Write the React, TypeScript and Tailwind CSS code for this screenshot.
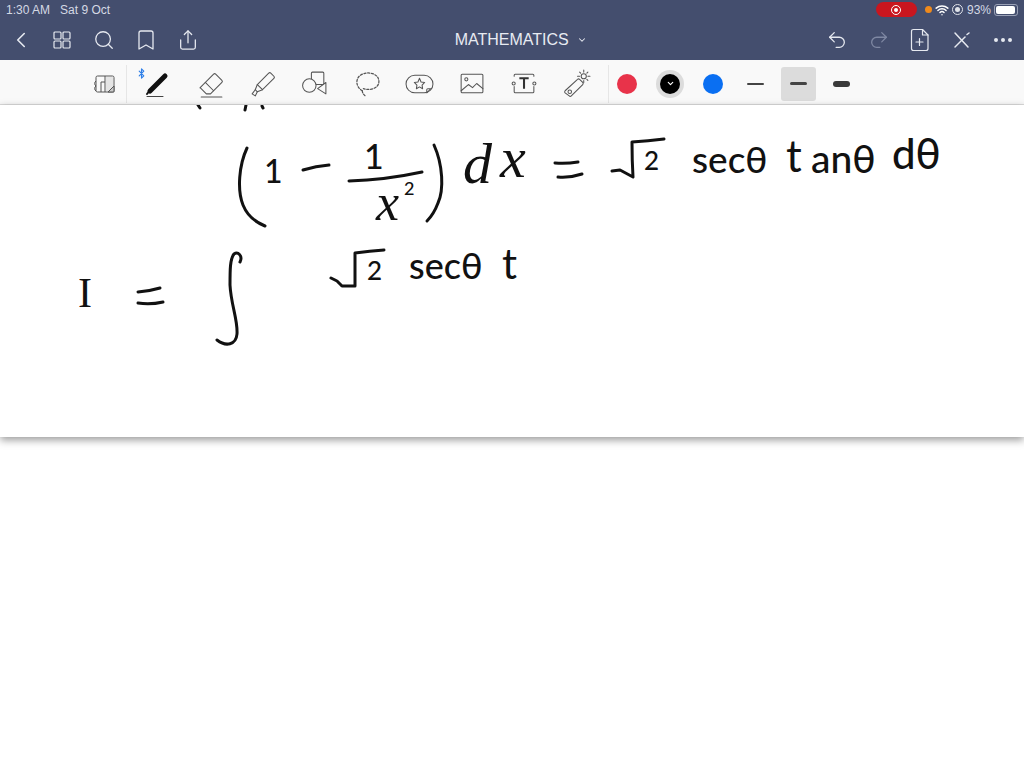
import React from "react";
import { ChevronLeft, ChevronDown, Search, Bookmark, Share, Undo2, Redo2, MoreHorizontal, Wifi, Bluetooth } from "lucide-react";

// each toolbar tool is a small line drawing, 28x28
function Tool({ children }: { children: React.ReactNode }) {
  return (
    <div className="flex w-[52.25px] items-center justify-center">
      <svg width="29" height="29" viewBox="0 0 28 28" fill="none" stroke="#555" strokeWidth="1" strokeLinecap="round" strokeLinejoin="round">
        {children}
      </svg>
    </div>
  );
}

function ColorDot({ className, children }: { className: string; children?: React.ReactNode }) {
  return <div className={`flex h-5 w-5 items-center justify-center rounded-full ${className}`}>{children}</div>;
}

function StatusBar() {
  return (
    <div className="flex h-[19px] items-center justify-between pl-[6px] pr-[6px] text-[12px] text-[#d5d9e4]">
      <div className="flex gap-[10px]">
        <span>1:30 AM</span>
        <span>Sat 9 Oct</span>
      </div>
      <div className="flex items-center">
        <div className="flex h-[15px] w-[41px] items-center justify-center rounded-full bg-[#c9161f]">
          <div className="flex h-[10px] w-[10px] items-center justify-center rounded-full border border-white">
            <div className="h-1 w-1 rounded-full bg-white" />
          </div>
        </div>
        <div className="ml-[8px] h-[7px] w-[7px] rounded-full bg-[#f08a1c]" />
        <Wifi className="ml-[3px] h-[14px] w-[14px] text-white" strokeWidth={2.5} />
        <div className="ml-[3px] flex h-[11px] w-[11px] items-center justify-center rounded-full border border-[#e0e3ea]">
          <div className="h-[5px] w-[5px] rounded-full bg-[#e0e3ea]" />
        </div>
        <span className="ml-[4px]">93%</span>
        <div className="ml-[3px] flex h-[12px] w-[24px] items-center rounded-[3px] border border-[#9aa1b6] p-px">
          <div className="h-full w-[19px] rounded-[2px] bg-white" />
        </div>
      </div>
    </div>
  );
}

function NavBar() {
  return (
    <div className="flex h-[41px] items-center justify-between pt-[1px] text-[#e6e9f0]">
      <div className="flex items-center">
        <div className="flex w-[41px] justify-center"><ChevronLeft className="h-[26px] w-[26px]" strokeWidth={1.5} /></div>
        <div className="flex w-[42px] justify-center">
          <svg width="20" height="20" viewBox="0 0 20 20" fill="none" stroke="currentColor" strokeWidth="1.2">
            <rect x="2" y="2" width="7" height="7" rx="1" />
            <rect x="11" y="2" width="7" height="7" rx="1" />
            <rect x="2" y="11" width="7" height="7" rx="1" />
            <rect x="11" y="11" width="7" height="7" rx="1" />
          </svg>
        </div>
        <div className="flex w-[42px] justify-center"><Search className="h-[22px] w-[22px]" strokeWidth={1.4} /></div>
        <div className="flex w-[42px] justify-center"><Bookmark className="h-[24px] w-[24px]" strokeWidth={1.3} /></div>
        <div className="flex w-[42px] justify-center"><Share className="h-[22px] w-[22px]" strokeWidth={1.4} /></div>
      </div>
      <div className="flex items-center pl-[16px] text-[16px] text-[#e8ebf2]">
        <span>MATHEMATICS</span>
        <ChevronDown className="ml-2 h-[10px] w-[10px]" strokeWidth={2.5} />
      </div>
      <div className="flex items-center">
        <div className="flex w-[41.5px] justify-center"><Undo2 className="h-[22px] w-[22px]" strokeWidth={1.4} /></div>
        <div className="flex w-[41.5px] justify-center"><Redo2 className="h-[22px] w-[22px] text-[#7f88a3]" strokeWidth={1.4} /></div>
        <div className="flex w-[41.5px] justify-center">
          <svg width="20" height="24" viewBox="0 0 20 24" fill="none" stroke="currentColor" strokeWidth="1.2" strokeLinejoin="round" strokeLinecap="round">
            <path d="M3.5 1.5 H12.5 L18 7 V20.5 Q18 22.5 16 22.5 H3.5 Q1.5 22.5 1.5 20.5 V3.5 Q1.5 1.5 3.5 1.5 Z" />
            <path d="M12.5 1.5 V7 H18" />
            <path d="M6 14 H13 M9.5 10.5 V17.5" />
          </svg>
        </div>
        <div className="flex w-[41.5px] justify-center">
          <svg width="20" height="20" viewBox="0 0 20 20" fill="none" stroke="currentColor" strokeWidth="1.5" strokeLinecap="round">
            <path d="M3 3 L16 17" />
            <path d="M3 17 L13 7" />
            <path d="M15 4.5 L17 3" />
          </svg>
        </div>
        <div className="flex w-[41.5px] justify-center"><MoreHorizontal className="h-6 w-6" strokeWidth={2} /></div>
      </div>
    </div>
  );
}

function ToolBar() {
  return (
    <div className="flex h-[45px] items-center border-b border-[#dcdcdc] bg-[#f9f9f9] pl-[93px] pt-[3px]">
      <svg width="22" height="20" viewBox="0 0 22 20" fill="none" stroke="#555" strokeWidth="1">
        <rect x="3" y="2" width="18" height="16" rx="1.5" />
        <rect x="13" y="3" width="7" height="14" fill="#e5e5e5" stroke="none" />
        <path d="M12 2 V18" />
        <path d="M12 8 H8 V18 M3 7 A3 3 0 0 0 3 12 A3 3 0 0 0 3 17" />
        <path d="M21 12 L15 18 H21 Z" fill="#ccc" />
      </svg>
      <div className="ml-[11px] h-[38px] w-px bg-[#e6e6e6]" />
      <div className="ml-[5px] flex">
        <div className="relative flex w-[52.25px] items-center justify-center">
          <svg width="28" height="28" viewBox="0 0 28 28" fill="none" strokeLinecap="round">
            <path d="M6 21 L21 6" stroke="#111" strokeWidth="5" />
            <path d="M3 24 L6 20" stroke="#111" strokeWidth="2" />
            <path d="M3 26.5 H19" stroke="#444" strokeWidth="1" />
          </svg>
          <Bluetooth className="absolute left-[4px] top-[-1px] h-[11px] w-[11px] text-[#2f7fe8]" strokeWidth={2.5} />
        </div>
        <Tool>
          <path d="M4 18 L17 5 Q18 4 19 5 L25 11 Q26 12 25 13 L14 24 H10 L4 18 Q3.5 18 4 18 Z" />
          <path d="M9 13 L17 21" />
          <path d="M5 27 H25" />
        </Tool>
        <Tool>
          <path d="M9 15 L20 4 Q21 3 22 4 L25 7 Q26 8 25 9 L14 20 Z" />
          <path d="M9 15 L7 20 L9 22 L14 20" />
          <path d="M7 20 L4 24 L7 26 L9 22" />
        </Tool>
        <Tool>
          <rect x="11" y="3" width="12" height="12" rx="1" />
          <circle cx="9" cy="16" r="6.5" fill="#f9f9f9" />
          <path d="M25 13 V24 L17 19 Z" fill="#f9f9f9" />
        </Tool>
        <Tool>
          <path d="M9 21 C2 17 2 8 9 5 C16 2 25 5 25 12 C25 19 16 21 10 19" strokeDasharray="2 1.6" strokeWidth="1.2" />
          <path d="M9 21 Q9 24 12 26" strokeDasharray="2 1.6" strokeWidth="1.2" />
        </Tool>
        <Tool>
          <rect x="1" y="6" width="26" height="17" rx="8.5" />
          <path d="M14 9 L15.5 12.5 L19 13 L16.5 15.5 L17 19 L14 17.3 L11 19 L11.5 15.5 L9 13 L12.5 12.5 Z" />
          <path d="M21 23 L25 19 H22 Q21 19 21 20 Z" fill="#f9f9f9" />
        </Tool>
        <Tool>
          <rect x="4" y="5" width="21" height="18" rx="1" />
          <circle cx="9" cy="10" r="1.5" />
          <path d="M4 21 L11 15 L15 18 L19 14 L25 19" />
        </Tool>
        <Tool>
          <path d="M5 7 V6 Q5 5 6 5 H23 Q24 5 24 6 V7 M5 17 V22 Q5 23 6 23 H23 Q24 23 24 22 V17" />
          <circle cx="4.5" cy="14" r="1.5" />
          <circle cx="24.5" cy="14" r="1.5" />
          <path d="M10 9 H19 M14.5 9 V19" stroke="#333" strokeWidth="2" strokeLinecap="butt" />
        </Tool>
        <Tool>
          <path d="M3 21 L15 10 Q16 9 17 10 L20 13 Q21 14 20 15 L9 26 Q8 27 7 26 L3 23 Q2 22 3 21 Z" />
          <circle cx="7.5" cy="22" r="1.7" />
          <circle cx="21" cy="7" r="2.5" />
          <path d="M21 1 V3 M21 11 V13 M15 7 H17 M25 7 H27 M17 3 L18 4 M24 10 L25 11 M25 3 L24 4" />
        </Tool>
      </div>
      <div className="ml-[6px] h-[38px] w-px bg-[#e6e6e6]" />
      <div className="ml-[8px] flex items-center gap-[23px]">
        <ColorDot className="bg-[#e8334a]" />
        <ColorDot className="bg-black shadow-[0_0_0_4px_#dcdcdc]">
          <ChevronDown className="h-[9px] w-[9px] text-white" strokeWidth={3} />
        </ColorDot>
        <ColorDot className="bg-[#0a6ff2]" />
      </div>
      <div className="ml-[15px] flex items-center gap-2">
        <div className="flex h-[34px] w-[35px] items-center justify-center">
          <div className="h-[2px] w-[17px] rounded-full bg-[#444]" />
        </div>
        <div className="flex h-[34px] w-[35px] items-center justify-center rounded-[3px] bg-[#dcdcdc]">
          <div className="h-[3px] w-[17px] rounded-full bg-[#444]" />
        </div>
        <div className="flex h-[34px] w-[35px] items-center justify-center">
          <div className="h-[6px] w-[17px] rounded-full bg-[#3a3a3a]" />
        </div>
      </div>
    </div>
  );
}

// the strokes of the note that are not letters: brackets, bars, roots, integral
function InkStrokes() {
  return (
    <svg className="absolute inset-0 h-full w-full" viewBox="0 105 1024 332" fill="none" stroke="#111" strokeWidth="3" strokeLinecap="round" strokeLinejoin="round">
      <path d="M198 105 L200 108 M246 105 L245 110 M262 106 L263 108" />
      <path d="M247 148 C239 165 237 190 243 205 C247 215 255 222 265 226" />
      <path d="M303 170 Q316 166 329 165" />
      <path d="M349 181 Q385 180 422 172" />
      <path d="M434 145 C443 165 444 190 438 203 C435 211 431 217 427 221" />
      <path d="M555 163 Q566 164 578 162" />
      <path d="M558 177 Q570 178 582 174" />
      <path d="M612 171 L620 170 L633 177 Q632 160 632 142 Q648 141 664 139" />
      <path d="M138 292 Q150 291 160 288" />
      <path d="M138 303 Q150 305 163 302" />
      <path d="M240 262 C243 256 238 251 234 254 C230 259 230 270 230 285 C231 305 238 320 237 334 C236 345 226 347 217 340" />
      <path d="M331 278 L337 281 L342 286 L355 286 Q355 270 355 253 Q370 251 384 250" />
    </svg>
  );
}

function Note() {
  return (
    <div className="relative h-[332px] overflow-hidden bg-white text-[#111] font-['Lato',sans-serif] font-medium leading-none shadow-[0_3px_8px_rgba(0,0,0,0.4)]">
      <InkStrokes />
      <span className="absolute left-[264px] top-[50px] text-[32px]">1</span>
      <span className="absolute left-[364px] top-[34px] text-[34px]">1</span>
      <span className="absolute left-[376px] top-[72px] font-['Liberation_Serif',serif] text-[52px] italic">x</span>
      <span className="absolute left-[404px] top-[74px] text-[18px]">2</span>
      <span className="absolute left-[463px] top-[30px] font-['Liberation_Serif',serif] text-[58px] italic">d</span>
      <span className="absolute left-[500px] top-[24px] font-['Liberation_Serif',serif] text-[58px] italic">x</span>
      <span className="absolute left-[644px] top-[42px] text-[26px]">2</span>
      <span className="absolute left-[692px] top-[35px] whitespace-nowrap text-[37px]">secθ</span>
      <span className="absolute left-[786px] top-[28px] font-normal text-[44px]">t</span>
      <span className="absolute left-[811px] top-[34px] whitespace-nowrap text-[39px]">anθ</span>
      <span className="absolute left-[892px] top-[27px] whitespace-nowrap text-[42px]">dθ</span>
      <span className="absolute left-[78px] top-[167px] font-['Liberation_Serif',serif] text-[42px]">I</span>
      <span className="absolute left-[367px] top-[152px] text-[26px]">2</span>
      <span className="absolute left-[409px] top-[142px] whitespace-nowrap text-[36px]">secθ</span>
      <span className="absolute left-[502px] top-[137px] font-normal text-[42px]">t</span>
    </div>
  );
}

export default function App() {
  return (
    <div className="h-screen w-full overflow-hidden bg-white font-['Liberation_Sans',sans-serif]">
      <div className="bg-[#444e6e]">
        <StatusBar />
        <NavBar />
      </div>
      <ToolBar />
      <Note />
    </div>
  );
}
